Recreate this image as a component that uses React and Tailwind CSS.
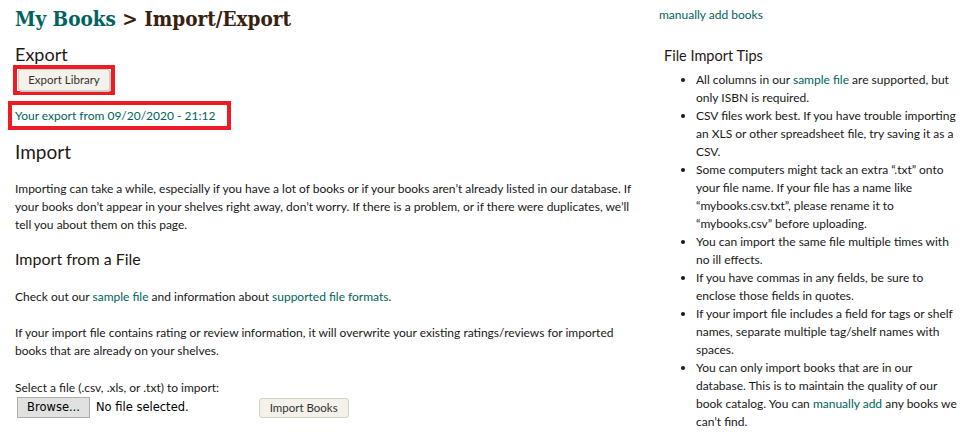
export default function App() {
  const link = "text-[#00635d]";
  return (
    <div className="w-[965px] h-[434px] overflow-hidden bg-white text-[#181818] flex" style={{ fontFamily: "Lato, 'Noto Sans', sans-serif" }}>
      <div className="w-[659px] pl-[15px] shrink-0">
        <h1 className="mt-[4px] text-[20.5px] leading-[30px] font-bold whitespace-nowrap" style={{ fontFamily: "'DejaVu Serif Condensed', 'DejaVu Serif', serif" }}>
          <span className="text-[#00635d]">My Books</span>
          <span className="text-[#382110]"> &gt; Import/Export</span>
        </h1>
        <h2 className="mt-[9px] text-[18px] leading-[22px] text-[#1e1915]">Export</h2>
        <div className="-ml-[2px] inline-block border-4 border-[#ed1c24] pl-[1px] pr-[1px]">
          <button className="block w-[92px] h-[22px] rounded-[3px] border border-[#d6d0c4] bg-[#f4f1ea] text-[11.5px] text-[#333] shadow-[1px_1px_0_#cfc9bd]">Export Library</button>
        </div>
        <div className="mt-[6px] -ml-[7px] w-[223px] h-[29px] border-4 border-[#ed1c24] pl-[3px] text-[12px] leading-[21px] text-[#00635d] whitespace-nowrap">
          Your export from 09/20/2020 - 21:12
        </div>
        <h2 className="mt-[10px] text-[19px] leading-[24px] text-[#1e1915]">Import</h2>
        <div className="w-[625px]">
          <p className="mt-[16px] text-[12px] leading-[18px]">
            Importing can take a while, especially if you have a lot of books or if your books aren’t already listed in our database. If your books don’t appear in your shelves right away, don’t worry. If there is a problem, or if there were duplicates, we’ll tell you about them on this page.
          </p>
          <h3 className="mt-[15px] text-[16px] leading-[20px] text-[#1e1915]">Import from a File</h3>
          <p className="mt-[19px] text-[12px] leading-[18px]">
            Check out our <span className={link}>sample file</span> and information about <span className={link}>supported file formats</span>.
          </p>
          <p className="mt-[18px] text-[12px] leading-[18px]">
            If your import file contains rating or review information, it will overwrite your existing ratings/reviews for imported books that are already on your shelves.
          </p>
          <p className="mt-[19px] text-[12px] leading-[18px]">Select a file (.csv, .xls, or .txt) to import:</p>
          <div className="mt-0 flex items-center">
            <div className="ml-[2px] w-[73px] h-[21px] border border-[#adadad] bg-[#e1e1e1] flex items-center justify-center text-[11.5px] text-black" style={{ fontFamily: "'DejaVu Sans', sans-serif" }}>Browse...</div>
            <span className="ml-[6px] text-[11.5px] text-black" style={{ fontFamily: "'DejaVu Sans', sans-serif" }}>No file selected.</span>
            <button className="ml-[70px] w-[90px] h-[20px] rounded-[3px] border border-[#d6d0c4] bg-[#f4f1ea] text-[11.5px] text-[#333]">Import Books</button>
          </div>
        </div>
      </div>
      <div className="w-[306px] shrink-0">
        <div className="mt-[6px] text-[12px] leading-[18px] text-[#00635d]">manually add books</div>
        <h3 className="mt-[22px] ml-[5px] text-[14.5px] leading-[20px] text-[#1e1915]">File Import Tips</h3>
        <ul className="mt-[5px] pl-[37px] list-disc text-[12px] leading-[18px]">
          <li>All columns in our <span className={link}>sample file</span> are supported, but only ISBN is required.</li>
          <li>CSV files work best. If you have trouble importing an XLS or other spreadsheet file, try saving it as a CSV.</li>
          <li>Some computers might tack an extra “.txt” onto your file name. If your file has a name like “mybooks.csv.txt”, please rename it to “mybooks.csv” before uploading.</li>
          <li>You can import the same file multiple times with no ill effects.</li>
          <li>If you have commas in any fields, be sure to enclose those fields in quotes.</li>
          <li>If your import file includes a field for tags or shelf names, separate multiple tag/shelf names with spaces.</li>
          <li>You can only import books that are in our database. This is to maintain the quality of our book catalog. You can <span className={link}>manually add</span> any books we can’t find.</li>
        </ul>
      </div>
    </div>
  );
}
